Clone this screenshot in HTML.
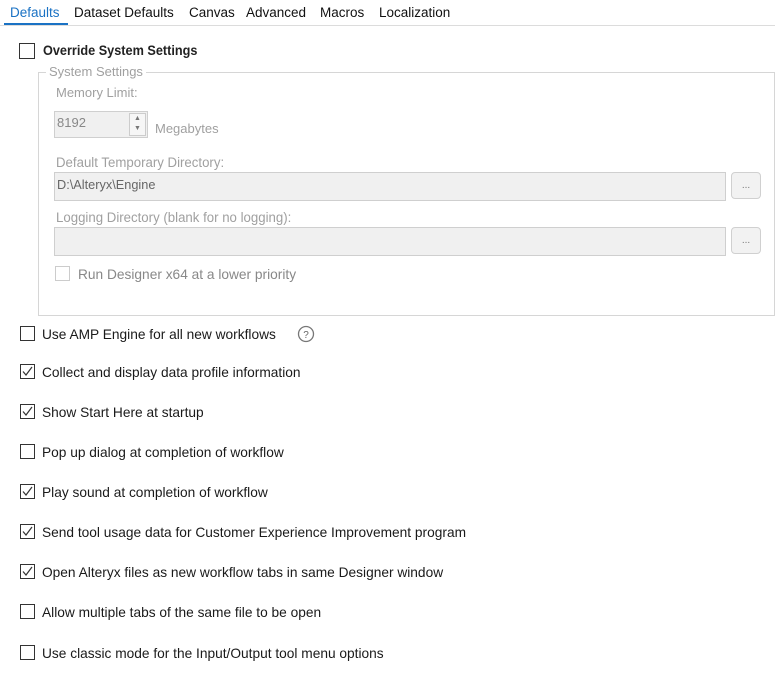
<!DOCTYPE html>
<html><head><style>
body{margin:0;width:775px;height:688px;background:#fff;font-family:"Liberation Sans",sans-serif;position:relative;overflow:hidden;color:#1a1a1a}
.a{position:absolute;white-space:nowrap}
.tabs span{position:absolute;top:5px;font-size:13.5px;color:#111}
.cb{position:absolute;width:13px;height:13px;border:1px solid #333;background:#fff}
.cb svg{position:absolute;left:1px;top:1px}
.lbl{position:absolute;font-size:14px;transform:scaleX(0.98);transform-origin:left center;white-space:nowrap;line-height:16px}
.g{color:#a0a0a0}
.inp{position:absolute;background:#f0f0f0;border:1px solid #cfcfcf}
.btn{position:absolute;width:28px;height:25px;border:1px solid #d0d0d0;border-radius:4px;background:#f2f2f2;font-size:10px;color:#777;text-align:center;line-height:26px}
</style></head><body>
<div class="tabs">
<span style="left:10px;color:#1a72c4">Defaults</span>
<span style="left:74px">Dataset Defaults</span>
<span style="left:189px">Canvas</span>
<span style="left:246px">Advanced</span>
<span style="left:320px">Macros</span>
<span style="left:379px">Localization</span>
</div>
<div class="a" style="left:0;top:25px;width:775px;height:1px;background:#dcdcdc"></div>
<div class="a" style="left:4px;top:23px;width:64px;height:2px;background:#1a72c4"></div>

<div class="cb" style="left:19px;top:43px;width:14px;height:14px"></div>
<div class="a" style="left:43px;top:43px;font-size:13.5px;font-weight:bold;color:#222;transform:scaleX(0.94);transform-origin:left">Override System Settings</div>

<div class="a" style="left:38px;top:72px;width:735px;height:242px;border:1px solid #d6d6d6"></div>
<div class="a g" style="left:46px;top:64px;background:#fff;padding:0 3px;font-size:13px">System Settings</div>
<div class="a g" style="left:56px;top:85px;font-size:13px">Memory Limit:</div>
<div class="inp" style="left:54px;top:111px;width:92px;height:25px"></div>
<div class="a g" style="left:57px;top:115px;font-size:13px;color:#888">8192</div>
<div class="a" style="left:129px;top:113px;width:15px;height:21px;border:1px solid #ccc;background:#f6f6f6;font-size:7px;color:#777;text-align:center;line-height:10px">▲<br>▼</div>
<div class="a g" style="left:155px;top:121px;font-size:13px">Megabytes</div>

<div class="lbl g" style="left:56px;top:155px;font-size:13.5px">Default Temporary Directory:</div>
<div class="inp" style="left:54px;top:172px;width:670px;height:27px"></div>
<div class="lbl" style="left:57px;top:177px;font-size:13px;color:#666">D:\Alteryx\Engine</div>
<div class="btn" style="left:731px;top:172px">...</div>

<div class="lbl g" style="left:56px;top:210px;font-size:13.5px">Logging Directory (blank for no logging):</div>
<div class="inp" style="left:54px;top:227px;width:670px;height:27px"></div>
<div class="btn" style="left:731px;top:227px">...</div>

<div class="cb" style="left:55px;top:266px;border-color:#ccc"></div>
<div class="lbl g" style="left:78px;top:266px;color:#888">Run Designer x64 at a lower priority</div>

<div class="cb" style="left:20px;top:326px"></div>
<div class="lbl" style="left:42px;top:326px">Use AMP Engine for all new workflows</div>
<svg class="a" style="left:297px;top:325px" width="18" height="18"><circle cx="9" cy="9" r="7.5" fill="none" stroke="#777" stroke-width="1.3"/><text x="9" y="13" font-size="10" text-anchor="middle" fill="#666" font-family="Liberation Sans">?</text></svg>

<div class="cb" style="left:20px;top:364px"><svg width="11" height="11"><path d="M1 5.5 L4 9 L10 1" fill="none" stroke="#333" stroke-width="1.2"/></svg></div>
<div class="lbl" style="left:42px;top:364px">Collect and display data profile information</div>
<div class="cb" style="left:20px;top:404px"><svg width="11" height="11"><path d="M1 5.5 L4 9 L10 1" fill="none" stroke="#333" stroke-width="1.2"/></svg></div>
<div class="lbl" style="left:42px;top:404px">Show Start Here at startup</div>
<div class="cb" style="left:20px;top:444px"></div>
<div class="lbl" style="left:42px;top:444px">Pop up dialog at completion of workflow</div>
<div class="cb" style="left:20px;top:484px"><svg width="11" height="11"><path d="M1 5.5 L4 9 L10 1" fill="none" stroke="#333" stroke-width="1.2"/></svg></div>
<div class="lbl" style="left:42px;top:484px">Play sound at completion of workflow</div>
<div class="cb" style="left:20px;top:524px"><svg width="11" height="11"><path d="M1 5.5 L4 9 L10 1" fill="none" stroke="#333" stroke-width="1.2"/></svg></div>
<div class="lbl" style="left:42px;top:524px">Send tool usage data for Customer Experience Improvement program</div>
<div class="cb" style="left:20px;top:564px"><svg width="11" height="11"><path d="M1 5.5 L4 9 L10 1" fill="none" stroke="#333" stroke-width="1.2"/></svg></div>
<div class="lbl" style="left:42px;top:564px">Open Alteryx files as new workflow tabs in same Designer window</div>
<div class="cb" style="left:20px;top:604px"></div>
<div class="lbl" style="left:42px;top:604px">Allow multiple tabs of the same file to be open</div>
<div class="cb" style="left:20px;top:645px"></div>
<div class="lbl" style="left:42px;top:645px">Use classic mode for the Input/Output tool menu options</div>
</body></html>
